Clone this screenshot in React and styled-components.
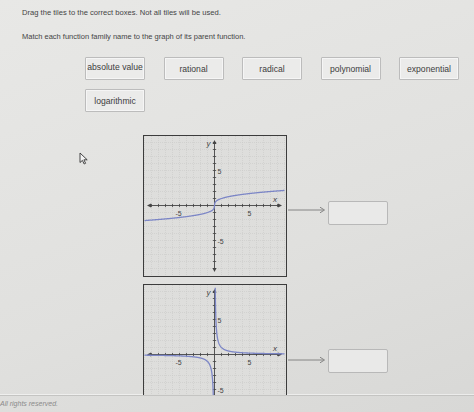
import styled, { createGlobalStyle } from "styled-components";

const GlobalStyle = createGlobalStyle`
  html, body {
    margin: 0;
    padding: 0;
  }
  body {
    width: 474px;
    height: 412px;
    overflow: hidden;
    background: linear-gradient(160deg, #e8e8e6 0%, #e0e0de 60%, #d8d8d6 100%);
    font-family: "Liberation Sans", Arial, sans-serif;
    color: #3a3a3a;
  }
`;

const Page = styled.div`
  position: relative;
  height: 395px;
  overflow: hidden;
`;

const Instructions = styled.p`
  margin: 0;
  padding: 8px 0 0 22px;
  font-size: 7.6px;
  line-height: 9px;
  color: #444;
`;

const Prompt = styled(Instructions)`
  padding-top: 15px;
  font-size: 7.5px;
`;

const TileBank = styled.div`
  display: flex;
  flex-wrap: wrap;
  gap: 9px 18.5px;
  width: 380px;
  margin: 16px 0 0 85px;
`;

const Tile = styled.div`
  box-sizing: border-box;
  width: 60px;
  height: 23px;
  display: flex;
  align-items: center;
  justify-content: center;
  padding-bottom: ${(p) => (p.$up ? "3px" : "0")};
  border: 1px solid #bcbcbc;
  border-radius: 1px;
  background: #ebebea;
  box-shadow: 0 0 0 1px rgba(255, 255, 255, 0.5) inset;
  font-size: 8.6px;
  color: #3d3d3d;
`;

const Matches = styled.div`
  display: flex;
  flex-direction: column;
  gap: 7px;
  margin: 23px 0 0 143px;
`;

const MatchRow = styled.div`
  display: flex;
  align-items: center;
`;

const GraphFrame = styled.div`
  box-sizing: border-box;
  width: 144px;
  height: 142px;
  border: 1.5px solid #3c3c3c;
  background: #dededc;
  flex-shrink: 0;
  svg {
    display: block;
  }
`;

const Arrow = styled.svg`
  display: block;
  margin: ${(p) => p.$offset}px 0 0 1px;
`;

const DropBox = styled.div`
  box-sizing: border-box;
  width: 60px;
  height: 24px;
  margin: ${(p) => p.$offset}px 0 0 2px;
  border: 1px solid #b8b8b8;
  border-radius: 2px;
  background: #e9e9e8;
`;

const Footer = styled.footer`
  border-top: 1px solid #c4c4c2;
  box-shadow: 0 -1px 0 rgba(255, 255, 255, 0.5);
  padding: 4px 0 0 0;
  font-size: 7px;
  font-style: italic;
  color: #8a8a8a;
`;

const Cursor = styled.svg`
  position: absolute;
  left: 79px;
  top: 152px;
`;

const S = 7;
const W = 141;
const H = 139;

function Plot({ curves }) {
  const ox = W / 2;
  const oy = H / 2;
  const lines = [];
  for (let i = -10; i <= 10; i++) {
    if (i === 0) continue;
    lines.push(
      <line key={"v" + i} x1={ox + i * S} y1={0} x2={ox + i * S} y2={H} stroke="#c9c9c7" strokeWidth="0.6" strokeDasharray="1 1" />,
      <line key={"h" + i} x1={0} y1={oy + i * S} x2={W} y2={oy + i * S} stroke="#c9c9c7" strokeWidth="0.6" strokeDasharray="1 1" />
    );
  }
  const ticks = [];
  for (let i = -9; i <= 9; i++) {
    if (i === 0) continue;
    ticks.push(
      <line key={"tx" + i} x1={ox + i * S} y1={oy - 1.6} x2={ox + i * S} y2={oy + 1.6} stroke="#444" strokeWidth="0.8" />,
      <line key={"ty" + i} x1={ox - 1.6} y1={oy + i * S} x2={ox + 1.6} y2={oy + i * S} stroke="#444" strokeWidth="0.8" />
    );
  }
  const label = { fontFamily: "Liberation Sans, Arial, sans-serif", fontSize: 7, fill: "#444" };
  return (
    <svg width={W} height={H} viewBox={`0 0 ${W} ${H}`}>
      {lines}
      <line x1={4} y1={oy} x2={W - 4} y2={oy} stroke="#444" strokeWidth="0.9" />
      <line x1={ox} y1={5} x2={ox} y2={H - 4} stroke="#444" strokeWidth="0.9" />
      <path d={`M3 ${oy} l4 -2 v4 z`} fill="#444" />
      <path d={`M${W - 3} ${oy} l-4 -2 v4 z`} fill="#444" />
      <path d={`M${ox} 4 l-2 4 h4 z`} fill="#444" />
      <path d={`M${ox} ${H - 3} l-2 -4 h4 z`} fill="#444" />
      {ticks}
      <text x={ox - 8} y={10} style={{ ...label, fontStyle: "italic", fontSize: 8 }}>y</text>
      <text x={W - 12} y={oy - 4} style={{ ...label, fontStyle: "italic", fontSize: 8 }}>x</text>
      <text x={ox + 5 * S - 2} y={oy + 10} style={label}>5</text>
      <text x={ox - 5 * S - 4} y={oy + 10} style={label}>-5</text>
      <text x={ox + 3} y={oy - 5 * S + 3} style={label}>5</text>
      <text x={ox + 3} y={oy + 5 * S + 3} style={label}>-5</text>
      {curves.map((d, i) => (
        <path key={i} d={d} fill="none" stroke="#7c86c6" strokeWidth="1.3" />
      ))}
    </svg>
  );
}

function curve(f, from, to, steps = 160) {
  const ox = W / 2;
  const oy = H / 2;
  let d = "";
  for (let i = 0; i <= steps; i++) {
    const x = from + ((to - from) * i) / steps;
    const y = f(x);
    const px = ox + x * S;
    const py = oy - y * S;
    d += (i === 0 ? "M" : "L") + px.toFixed(2) + " " + py.toFixed(2) + " ";
  }
  return d;
}

const cubeRoot = [curve((x) => Math.cbrt(x), -10, 10, 400)];
const reciprocal = [
  curve((x) => 1 / x, 0.105, 10, 300),
  curve((x) => 1 / x, -10, -0.105, 300),
];

function LinkArrow({ offset }) {
  return (
    <Arrow width="38" height="8" viewBox="0 0 38 8" $offset={offset}>
      <line x1="0" y1="4" x2="35" y2="4" stroke="#7a7a7a" strokeWidth="0.9" />
      <path d="M32 1.2 L36.5 4 L32 6.8" fill="none" stroke="#7a7a7a" strokeWidth="0.9" />
    </Arrow>
  );
}

const tiles = ["absolute value", "rational", "radical", "polynomial", "exponential", "logarithmic"];

export default function App() {
  return (
    <>
      <GlobalStyle />
      <Page>
        <Instructions>Drag the tiles to the correct boxes. Not all tiles will be used.</Instructions>
        <Prompt>Match each function family name to the graph of its parent function.</Prompt>
        <TileBank>
          {tiles.map((t, i) => (
            <Tile key={t} $up={i === 0}>{t}</Tile>
          ))}
        </TileBank>
        <Matches>
          <MatchRow>
            <GraphFrame>
              <Plot curves={cubeRoot} />
            </GraphFrame>
            <LinkArrow offset={8} />
            <DropBox $offset={14} />
          </MatchRow>
          <MatchRow>
            <GraphFrame>
              <Plot curves={reciprocal} />
            </GraphFrame>
            <LinkArrow offset={10} />
            <DropBox $offset={12} />
          </MatchRow>
        </Matches>
        <Cursor width="10" height="13" viewBox="0 0 10 13">
          <path d="M1 1 L1 10.5 L3.4 8.4 L5.2 12 L6.6 11.3 L4.9 7.8 L8.2 7.8 Z" fill="#f4f4f4" stroke="#333" strokeWidth="0.9" strokeLinejoin="round" />
        </Cursor>
      </Page>
      <Footer>All rights reserved.</Footer>
    </>
  );
}
